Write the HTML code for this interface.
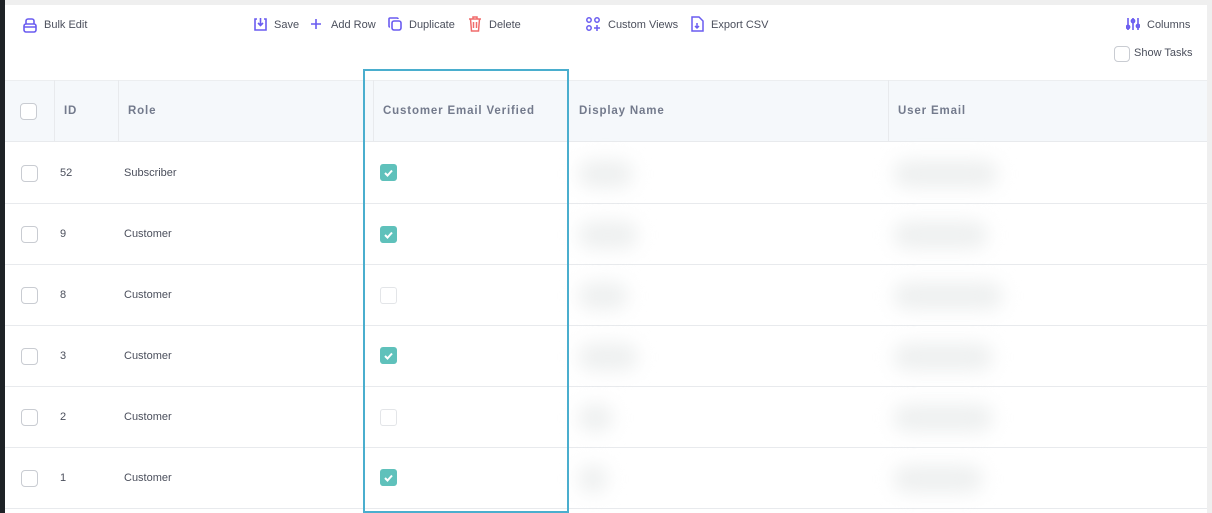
<!DOCTYPE html>
<html><head><meta charset="utf-8"><style>
*{margin:0;padding:0;box-sizing:border-box}
body{width:1212px;height:513px;overflow:hidden;background:#efefef;font-family:"Liberation Sans",sans-serif;position:relative}
.a{position:absolute}
.main{left:5px;top:5px;width:1202px;height:508px;background:#fff}
.t{font-size:11px;color:#4b4f5c}
.tb{font-size:11.5px;font-weight:bold;color:#737a8c;letter-spacing:0.85px}
.cb{width:17px;height:17px;border:1.5px solid #c9ccd2;border-radius:4px;background:#fff}
.ck{width:17px;height:17px;border-radius:3px;background:#5fc1bb}
.ek{width:17px;height:17px;border:1px solid #e3e5e8;border-radius:3px;background:#fff}
.hl{height:1px;background:#e8eaed;left:5px;width:1202px}
.bl{background:#eef0f0;border-radius:14px;filter:blur(9px)}
svg{position:absolute}
</style></head><body>
<div class="a" style="left:0;top:0;width:5px;height:513px;background:#1e2226"></div>
<div class="a main"></div>
<!-- toolbar -->
<svg style="left:23px;top:17px" width="14" height="16" viewBox="0 0 14 16" fill="none" stroke="#6a5cf0" stroke-width="1.6"><rect x="1" y="7" width="12" height="8" rx="2"/><path d="M3 7V4a2 2 0 0 1 2-2h4a2 2 0 0 1 2 2v3M1 10h12"/></svg>
<div class="a t" style="left:44px;top:19px">Bulk Edit</div>
<svg style="left:253px;top:17px" width="15" height="15" viewBox="0 0 15 15" fill="none" stroke="#6a5cf0" stroke-width="1.6"><path d="M4 2H2v11h11V2h-2M7.5 1v7M5 6l2.5 2.5L10 6"/></svg>
<div class="a t" style="left:274px;top:19px">Save</div>
<svg style="left:310px;top:18px" width="12" height="12" viewBox="0 0 12 12" stroke="#6a5cf0" stroke-width="1.6"><path d="M6 1v10M1 6h10"/></svg>
<div class="a t" style="left:331px;top:19px">Add Row</div>
<svg style="left:388px;top:17px" width="14" height="14" viewBox="0 0 14 14" fill="none" stroke="#6a5cf0" stroke-width="1.6"><rect x="4" y="4" width="9" height="9" rx="2"/><path d="M10 2a1 1 0 0 0-1-1H2a1 1 0 0 0-1 1v7a1 1 0 0 0 1 1"/></svg>
<div class="a t" style="left:409px;top:19px">Duplicate</div>
<svg style="left:468px;top:16px" width="14" height="16" viewBox="0 0 14 16" fill="none" stroke="#f06b6b" stroke-width="1.5"><path d="M1 3h12M5 3V1h4v2M2.5 3l1 12h7l1-12M5.5 6v6M8.5 6v6"/></svg>
<div class="a t" style="left:489px;top:19px">Delete</div>
<svg style="left:586px;top:17px" width="14" height="14" viewBox="0 0 14 14" fill="none" stroke="#6a5cf0" stroke-width="1.5"><circle cx="3" cy="3" r="2.2"/><circle cx="11" cy="3" r="2.2"/><circle cx="3" cy="11" r="2.2"/><path d="M11 8v6M8 11h6"/></svg>
<div class="a t" style="left:608px;top:19px">Custom Views</div>
<svg style="left:690px;top:16px" width="14" height="16" viewBox="0 0 14 16" fill="none" stroke="#6a5cf0" stroke-width="1.5"><path d="M2 1h7l4 4v10H2z M7 7v5M5 10l2 2 2-2"/></svg>
<div class="a t" style="left:711px;top:19px">Export CSV</div>
<svg style="left:1126px;top:17px" width="14" height="14" viewBox="0 0 14 14" fill="none" stroke="#6a5cf0" stroke-width="1.6"><path d="M2 1v12M7 1v12M12 1v12"/><circle cx="2" cy="10" r="1.6"/><circle cx="7" cy="4" r="1.6"/><circle cx="12" cy="9" r="1.6"/></svg>
<div class="a t" style="left:1147px;top:19px">Columns</div>
<div class="a cb" style="left:1114px;top:46px;width:16px;height:16px"></div>
<div class="a t" style="left:1134px;top:47px">Show Tasks</div>
<!-- header -->
<div class="a" style="left:5px;top:80px;width:1202px;height:61px;background:#f5f8fb;border-top:1px solid #eceef0"></div>
<div class="a" style="left:54px;top:80px;width:1px;height:61px;background:#e8eaed"></div>
<div class="a" style="left:118px;top:80px;width:1px;height:61px;background:#e8eaed"></div>
<div class="a" style="left:373px;top:80px;width:1px;height:61px;background:#e8eaed"></div>
<div class="a" style="left:888px;top:80px;width:1px;height:61px;background:#e8eaed"></div>
<div class="a cb" style="left:20px;top:103px"></div>
<div class="a tb" style="left:64px;top:105px">ID</div>
<div class="a tb" style="left:128px;top:105px">Role</div>
<div class="a tb" style="left:383px;top:105px">Customer Email Verified</div>
<div class="a tb" style="left:579px;top:105px">Display Name</div>
<div class="a tb" style="left:898px;top:105px">User Email</div>
<div class="a hl" style="top:141px"></div>
<!-- rows -->
<div class="a hl" style="top:203px"></div><div class="a hl" style="top:264px"></div><div class="a hl" style="top:325px"></div><div class="a hl" style="top:386px"></div><div class="a hl" style="top:447px"></div><div class="a hl" style="top:508px"></div>

<div class="a cb" style="left:21px;top:165px"></div><div class="a t" style="left:60px;top:167px">52</div><div class="a t" style="left:124px;top:167px">Subscriber</div><div class="a ck" style="left:380px;top:164px"></div>
<div class="a cb" style="left:21px;top:226px"></div><div class="a t" style="left:60px;top:228px">9</div><div class="a t" style="left:124px;top:228px">Customer</div><div class="a ck" style="left:380px;top:226px"></div>
<div class="a cb" style="left:21px;top:287px"></div><div class="a t" style="left:60px;top:289px">8</div><div class="a t" style="left:124px;top:289px">Customer</div><div class="a ek" style="left:380px;top:287px"></div>
<div class="a cb" style="left:21px;top:348px"></div><div class="a t" style="left:60px;top:350px">3</div><div class="a t" style="left:124px;top:350px">Customer</div><div class="a ck" style="left:380px;top:347px"></div>
<div class="a cb" style="left:21px;top:409px"></div><div class="a t" style="left:60px;top:411px">2</div><div class="a t" style="left:124px;top:411px">Customer</div><div class="a ek" style="left:380px;top:409px"></div>
<div class="a cb" style="left:21px;top:470px"></div><div class="a t" style="left:60px;top:472px">1</div><div class="a t" style="left:124px;top:472px">Customer</div><div class="a ck" style="left:380px;top:469px"></div>
<!-- checkmarks -->
<svg style="left:380px;top:164px" width="17" height="17" viewBox="0 0 17 17"><path d="M5 9l2.5 2.5L12 6.5" stroke="#fff" stroke-width="2" fill="none"/></svg>
<svg style="left:380px;top:226px" width="17" height="17" viewBox="0 0 17 17"><path d="M5 9l2.5 2.5L12 6.5" stroke="#fff" stroke-width="2" fill="none"/></svg>
<svg style="left:380px;top:347px" width="17" height="17" viewBox="0 0 17 17"><path d="M5 9l2.5 2.5L12 6.5" stroke="#fff" stroke-width="2" fill="none"/></svg>
<svg style="left:380px;top:469px" width="17" height="17" viewBox="0 0 17 17"><path d="M5 9l2.5 2.5L12 6.5" stroke="#fff" stroke-width="2" fill="none"/></svg>
<!-- blurred -->
<div class="a bl" style="left:578px;top:160px;width:55px;height:28px"></div>
<div class="a bl" style="left:578px;top:221px;width:60px;height:28px"></div>
<div class="a bl" style="left:578px;top:282px;width:50px;height:28px"></div>
<div class="a bl" style="left:578px;top:343px;width:60px;height:28px"></div>
<div class="a bl" style="left:578px;top:404px;width:35px;height:28px"></div>
<div class="a bl" style="left:578px;top:465px;width:30px;height:28px"></div>
<div class="a bl" style="left:893px;top:160px;width:105px;height:28px"></div>
<div class="a bl" style="left:893px;top:221px;width:95px;height:28px"></div>
<div class="a bl" style="left:893px;top:282px;width:110px;height:28px"></div>
<div class="a bl" style="left:893px;top:343px;width:100px;height:28px"></div>
<div class="a bl" style="left:893px;top:404px;width:100px;height:28px"></div>
<div class="a bl" style="left:893px;top:465px;width:90px;height:28px"></div>
<!-- highlight -->
<div class="a" style="left:363px;top:69px;width:206px;height:444px;border:2px solid #4aaece"></div>
</body></html>
